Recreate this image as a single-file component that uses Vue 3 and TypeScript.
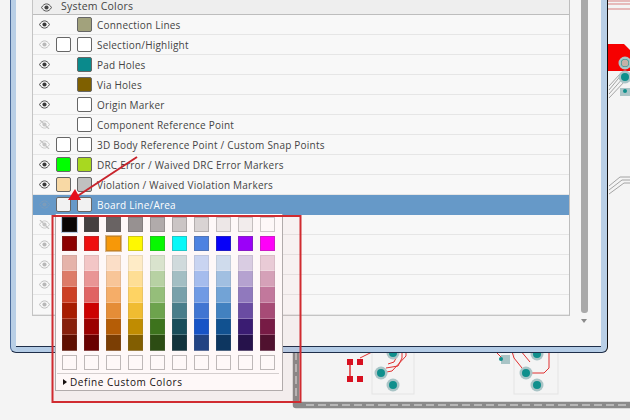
<script setup lang="ts">
type Eye = 'on' | 'dim' | 'off'

interface Row {
  eye: Eye
  first?: string
  second?: string
  label?: string
  selected?: boolean
}

// linhas da lista de cores
const rows: Row[] = [
  { eye: 'on', second: '#a2a27c', label: 'Connection Lines' },
  { eye: 'dim', first: '#fff', second: '#fff', label: 'Selection/Highlight' },
  { eye: 'on', second: '#0a8a8c', label: 'Pad Holes' },
  { eye: 'on', second: '#7f6000', label: 'Via Holes' },
  { eye: 'on', second: '#fff', label: 'Origin Marker' },
  { eye: 'off', second: '#fff', label: 'Component Reference Point' },
  { eye: 'off', first: '#fff', second: '#fff', label: '3D Body Reference Point / Custom Snap Points' },
  { eye: 'on', first: '#00ff00', second: '#a8d820', label: 'DRC Error / Waived DRC Error Markers' },
  { eye: 'on', first: '#f8d9a5', second: '#c0c0c0', label: 'Violation / Waived Violation Markers' },
  { eye: 'dim', first: '#f2f2f2', second: '#f2f2f2', label: 'Board Line/Area', selected: true },
  { eye: 'off' },
  { eye: 'dim' },
  { eye: 'dim' },
  { eye: 'dim' },
  { eye: 'dim' },
]

const greys = ['#050505', '#404040', '#666666', '#959595', '#b0b0b0', '#cbcbcb', '#d9d9d9', '#eeeeee', '#f3f3f3', '#ffffff']
const brights = ['#8b0000', '#f01010', '#f89c08', '#ffff00', '#00ff00', '#00ffff', '#4a86e8', '#0000ff', '#9900ff', '#ff00ff']

const shades: string[][] = [
  ['#e6b8af', '#dd7e6b', '#cc4125', '#a61c00', '#85200c', '#5b0f00'],
  ['#f4cccc', '#ea9999', '#e06666', '#cc0000', '#990000', '#660000'],
  ['#fce5cd', '#f9cb9c', '#f6b26b', '#e69138', '#b45f06', '#783f04'],
  ['#fff2cc', '#ffe599', '#ffd966', '#f1c232', '#bf9000', '#7f6000'],
  ['#d9ead3', '#b6d7a8', '#93c47d', '#6aa84f', '#38761d', '#274e13'],
  ['#d0e0e3', '#a2c4c9', '#76a5af', '#45818e', '#134f5c', '#0c343d'],
  ['#c9daf8', '#a4c2f4', '#6d9eeb', '#3c78d8', '#1155cc', '#1c4587'],
  ['#cfe2f3', '#9fc5e8', '#6fa8dc', '#3d85c6', '#0b5394', '#073763'],
  ['#d9d2e9', '#b4a7d6', '#8e7cc3', '#674ea7', '#351c75', '#20124d'],
  ['#ead1dc', '#d5a6bd', '#c27ba0', '#a64d79', '#741b47', '#4c1130'],
]

// furos dos componentes no fundo da placa
const holes = [
  [393, 353], [381, 373], [393, 385],
  [537, 354], [526, 373], [537, 385],
  [625, 63], [625, 77],
]
const redPads = [[350, 362], [360, 362], [350, 379], [360, 379]]
</script>

<template>
  <div class="page">
    <!-- placa ao fundo -->
    <svg class="board" width="630" height="420" viewBox="0 0 630 420">
      <g fill="none" stroke="#e4e4e4">
        <rect x="372" y="340" width="42" height="54" />
        <rect x="514" y="340" width="44" height="54" />
      </g>
      <g stroke="#e03030" fill="none">
        <path d="M608 1H630M608 4H630M608 9H630" stroke="#d98080" />
        <path d="M360 358L372 352M381 373L392 371L406 356V340M386 368L398 366L402 358V340M388 364L394 362L398 354" />
        <path d="M350 362V379" stroke-width="1.5" />
        <path d="M494 350L501 357M526 373H544L549 368V345M526 373L514 358L510 345M530 362L520 350" />
      </g>
      <path d="M602 44H624L630 50V71H602Z" fill="#f60000" />
      <g stroke="#8f8f8f" fill="none" stroke-width="0.8">
        <path d="M609 90L622 74M609 94L624 77M609 98L626 80M609 86L620 74" />
        <path d="M609 186L620 177H630M609 190L622 180H630M609 194L624 183H630" />
      </g>
      <rect x="501" y="355" width="9" height="9" fill="#a9c4c6" />
      <circle cx="501" cy="359" r="2" fill="#0f8f8c" />
      <rect x="620" y="88" width="10" height="8" fill="#a9c4c6" />
      <circle cx="625" cy="91" r="2" fill="#0f8f8c" />
      <g v-for="(h, i) in holes" :key="'h' + i">
        <circle :cx="h[0]" :cy="h[1]" r="6.5" fill="#a9c4c6" />
        <circle :cx="h[0]" :cy="h[1]" r="4" fill="#0f8f8c" />
      </g>
      <circle cx="625" cy="63" r="3.5" fill="#c5b0a8" />
      <rect v-for="(p, i) in redPads" :key="'p' + i" :x="p[0] - 3" :y="p[1] - 3" width="6" height="6" fill="#d81020" />
      <path d="M296 345V405H630" fill="none" stroke="#8a8a8a" stroke-width="6.5" stroke-linejoin="round" />
      <path d="M296 352V400M306 405H630" fill="none" stroke="#e6e6e6" stroke-dasharray="8 4" />
    </svg>

    <!-- janela de configuração -->
    <div class="dialog">
      <div class="list">
        <div class="header">
          <svg class="eye" width="11" height="9" viewBox="0 0 12 10">
            <path d="M0.5 5C2 2.2 4 1 6 1s4 1.200 5.500 4C10 7.800 8 9 6 9S2 7.800 0.500 5Z" fill="none" stroke="#444" />
            <circle cx="6" cy="5" r="2.300" fill="#444" />
          </svg>
          <span class="title">System Colors</span>
        </div>
        <div v-for="(row, i) in rows" :key="i" class="row" :class="{ selected: row.selected }">
          <svg class="eye" :class="row.eye" width="11" height="9" viewBox="0 0 12 10">
            <path d="M0.5 5C2 2.2 4 1 6 1s4 1.200 5.500 4C10 7.800 8 9 6 9S2 7.800 0.500 5Z" fill="none" stroke="currentColor" />
            <circle cx="6" cy="5" r="2.300" fill="currentColor" />
            <path v-if="row.eye === 'off'" d="M1 0L11 10" stroke="currentColor" stroke-width="1.300" />
          </svg>
          <span class="box first" :class="{ empty: !row.first }" :style="{ background: row.first }"></span>
          <span class="box" :class="{ empty: !row.second }" :style="{ background: row.second }"></span>
          <span class="label">{{ row.label }}</span>
        </div>
      </div>
      <div class="scroll">
        <div class="thumb"></div>
        <div class="arrow"></div>
      </div>
    </div>

    <!-- seletor de cores -->
    <div class="popup">
      <div class="grid">
        <span
          v-for="(c, i) in greys"
          :key="c"
          class="swatch"
          :class="{ focused: i === 0 }"
          :style="{ background: c }"
        ></span>
      </div>
      <div class="grid brights">
        <span
          v-for="(c, i) in brights"
          :key="c"
          class="swatch"
          :class="{ hovered: i === 2 }"
          :style="{ background: c }"
        ></span>
      </div>
      <div class="grid shades">
        <div v-for="(col, i) in shades" :key="i" class="column">
          <span v-for="c in col" :key="c" class="shade" :style="{ background: c }"></span>
        </div>
      </div>
      <div class="grid customs">
        <span v-for="n in 10" :key="n" class="swatch blank"></span>
      </div>
      <div class="define">
        <i class="caret"></i>
        <span>Define Custom Colors</span>
      </div>
    </div>

    <!-- anotações em vermelho -->
    <svg class="notes" width="630" height="420" viewBox="0 0 630 420">
      <rect x="52.500" y="216" width="248" height="186" fill="#d8282c" fill-opacity="0.03" stroke="#d02b30" stroke-width="2" />
      <path d="M137 157L76 197" stroke="#c8242c" stroke-width="2" />
      <path d="M75 189L68 200H81Z" fill="#e5101c" />
    </svg>
  </div>
</template>

<style>
html,
body {
  margin: 0;
  background: #f4f4f4;
}
</style>

<style scoped>
.page {
  position: relative;
  width: 630px;
  height: 420px;
  overflow: hidden;
  background: #f4f4f4;
  font-family: "Open Sans", "Liberation Sans", sans-serif;
  font-size: 10px;
  letter-spacing: 0.22px;
  color: #444;
}

.board,
.notes {
  position: absolute;
  left: 0;
  top: 0;
}

.notes {
  pointer-events: none;
}

/* janela */
.dialog {
  position: absolute;
  left: 10px;
  top: -30px;
  width: 598px;
  height: 383px;
  box-sizing: border-box;
  display: flex;
  padding: 26px 0 37px 21px;
  background: #f5f5f5;
  border: 1px solid #1f2f4a;
  border-top: 0;
  border-left-color: #4a6a9a;
  border-right-color: #111;
  border-radius: 0 0 6px 6px;
  box-shadow: inset 5px 0 0 #b9cfe6, inset -6px 0 0 #b9cfe6, inset 0 -5px 0 #b4cce6, inset 0 -6px 0 #1f2f4a;
}

.list {
  width: 538px;
  height: 320px;
  border: 1px solid #c4c4c4;
  border-right-color: #bdbdbd;
  box-sizing: border-box;
  background: #f8f8f8;
}

.header {
  height: 18px;
  padding: 0 0 2px 8px;
  box-sizing: border-box;
  display: flex;
  align-items: flex-end;
  gap: 9px;
  background: #eeeeee;
  border-bottom: 1px solid #bdbdbd;
  font-size: 10.500px;
}

.title {
  line-height: 12px;
}

.row {
  height: 20px;
  box-sizing: border-box;
  display: flex;
  align-items: center;
  padding-left: 6px;
  border-bottom: 1px solid #e6e6e6;
}

.row.selected {
  background: #6699c8;
  border-bottom-color: #6699c8;
  color: #fff;
}

.eye {
  flex: none;
  color: #3a3a3a;
}

.eye.dim {
  color: #b8b8b8;
}

.eye.off {
  color: #c4c4c4;
}

.selected .eye.dim {
  color: #7c9cba;
}

.box {
  flex: none;
  width: 15px;
  height: 15px;
  box-sizing: border-box;
  margin-left: 5px;
  margin-right: 1px;
  border: 1px solid #666;
  border-radius: 2px;
}

.box.first {
  margin-left: 6px;
}

.box.empty {
  visibility: hidden;
}

.label {
  margin-left: 4px;
  white-space: nowrap;
}

.scroll {
  width: 7px;
  margin-left: 11px;
  position: relative;
}

.thumb {
  width: 7px;
  height: 317px;
  margin-top: 0;
  background: #a9a9a9;
  border-radius: 0 0 3px 3px;
}

.arrow {
  width: 0;
  height: 0;
  margin: 6px 0 0 0;
  border-left: 3.500px solid transparent;
  border-right: 3.500px solid transparent;
  border-top: 4px solid #8a8a8a;
}

/* seletor */
.popup {
  position: absolute;
  left: 55px;
  top: 214px;
  width: 228px;
  height: 177px;
  box-sizing: border-box;
  padding: 3px 6px 0 6px;
  background: #fff;
  border: 1px solid #b0b0b0;
  border-top: 0;
  color: #111;
}

.grid {
  display: grid;
  grid-template-columns: repeat(10, 15px);
  column-gap: 7px;
}

.brights {
  margin-top: 4px;
}

.shades {
  margin-top: 4px;
}

.customs {
  margin-top: 4px;
}

.swatch {
  width: 15px;
  height: 15px;
  box-sizing: border-box;
  border: 1px solid rgba(90, 90, 90, 0.3);
}

.swatch.blank {
  border-color: #bdbdbd;
  background: #fff;
}

.swatch.focused {
  box-shadow: 0 0 0 1px #b9d2ea;
}

.swatch.hovered {
  box-shadow: 0 0 0 1px #d9b98a;
}

.column {
  display: flex;
  flex-direction: column;
  outline: 1px solid rgba(120, 120, 120, 0.15);
  outline-offset: -1px;
}

.shade {
  height: 16px;
  box-sizing: border-box;
  border-bottom: 1px solid rgba(255, 255, 255, 0.25);
}

.define {
  margin: 3px 0 0 -5px;
  padding: 0 0 0 6px;
  height: 16px;
  width: 222px;
  box-sizing: border-box;
  display: flex;
  align-items: center;
  gap: 3px;
  border-top: 1px solid #d4d4d4;
  letter-spacing: 0.55px;
}

.caret {
  width: 0;
  height: 0;
  border-top: 3.500px solid transparent;
  border-bottom: 3.500px solid transparent;
  border-left: 4px solid #111;
}
</style>
